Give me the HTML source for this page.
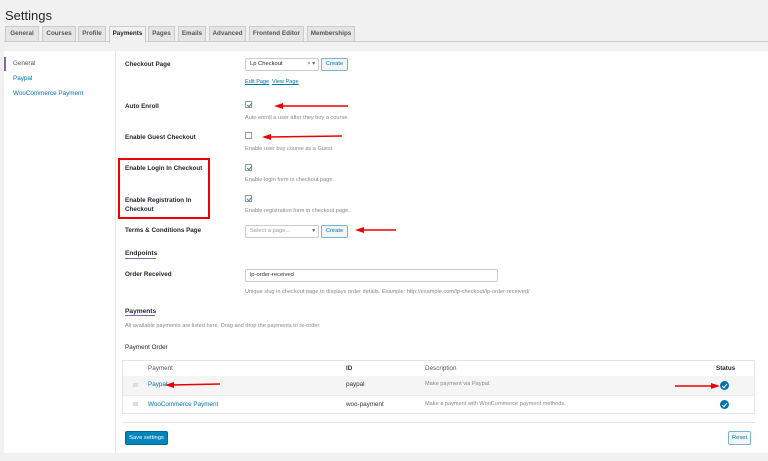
<!DOCTYPE html><html><head><style>
*{margin:0;padding:0;box-sizing:border-box}
body{width:768px;height:461px;background:#f1f1f1;font-family:"Liberation Sans",sans-serif;position:relative;overflow:hidden;color:#23282d}
.a{position:absolute;white-space:nowrap}
.t{font-size:6.3px;color:#555}
.tab{position:absolute;top:26px;height:16px;background:#e5e5e5;border:1px solid #ccc;font-size:6.3px;font-weight:bold;color:#555;text-align:center;line-height:14px}
.lb{font-size:6.3px;font-weight:bold;color:#23282d}
.d{font-size:5.6px;color:#888}
.cb{position:absolute;width:7px;height:7px;border:1px solid #999;background:#fff}
.cb.k::after{content:"";position:absolute;left:1.5px;top:0px;width:2px;height:4px;border:solid #1e8cbe;border-width:0 1.3px 1.3px 0;transform:rotate(40deg)}
.sel{position:absolute;height:13px;border:1px solid #ccc;background:#fff;font-size:5.8px;line-height:11px;padding-left:4px;border-radius:2px}
.btn{position:absolute;height:13px;border:1px solid #7bb3d6;background:#f3f5f6;font-size:5.8px;line-height:11px;text-align:center;color:#0073aa;border-radius:2px}
.lk{color:#0073aa}
.ck{position:absolute;width:9px;height:9px;border-radius:50%;background:#0073aa}
.ck::after{content:"";position:absolute;left:3px;top:1.5px;width:2px;height:4px;border:solid #fff;border-width:0 1.3px 1.3px 0;transform:rotate(40deg)}
</style></head><body>
<div class="a" style="left:5px;top:8px;font-size:13px;color:#23282d">Settings</div>
<div class="a" style="left:4px;top:41px;width:764px;height:1px;background:#ccc"></div>
<div class="tab" style="left:5px;width:34px">General</div>
<div class="tab" style="left:42px;width:34px">Courses</div>
<div class="tab" style="left:78px;width:28px">Profile</div>
<div class="tab" style="left:109px;width:37px;background:#f1f1f1;border-bottom-color:#f1f1f1;height:17px;color:#23282d">Payments</div>
<div class="tab" style="left:148px;width:27px">Pages</div>
<div class="tab" style="left:178px;width:28px">Emails</div>
<div class="tab" style="left:209px;width:37px">Advanced</div>
<div class="tab" style="left:249px;width:55px">Frontend Editor</div>
<div class="tab" style="left:307px;width:48px">Memberships</div>
<div class="a" style="left:4px;top:51px;width:764px;height:402px;background:#fff"></div>
<div class="a" style="left:115px;top:51px;width:1px;height:402px;background:#e5e5e5"></div>
<div class="a" style="left:4px;top:57px;width:2px;height:14px;background:#7e6aa8"></div>
<div class="a t lk" style="left:13px;top:60px;color:#555">General</div>
<div class="a t lk" style="left:13px;top:75px">Paypal</div>
<div class="a t lk" style="left:13px;top:90px">WooCommerce Payment</div>

<div class="a lb" style="left:125px;top:61px">Checkout Page</div>
<div class="sel" style="left:245px;top:58px;width:74px">Lp Checkout<span style="position:absolute;right:3px;color:#666">× ▾</span></div>
<div class="btn" style="left:321px;top:58px;width:27px">Create</div>
<div class="a d lk" style="left:245px;top:79px;text-decoration:underline;color:#0073aa">Edit Page</div>
<div class="a d" style="left:272px;top:79px;text-decoration:underline;color:#0073aa">View Page</div>

<div class="a lb" style="left:125px;top:103px">Auto Enroll</div>
<div class="cb k" style="left:245px;top:101px"></div>
<div class="a d" style="left:245px;top:115px">Auto enroll a user after they buy a course.</div>

<div class="a lb" style="left:125px;top:134px">Enable Guest Checkout</div>
<div class="cb" style="left:245px;top:132px"></div>
<div class="a d" style="left:245px;top:146px">Enable user buy course as a Guest.</div>

<div class="a lb" style="left:125px;top:165px">Enable Login In Checkout</div>
<div class="cb k" style="left:245px;top:164px"></div>
<div class="a d" style="left:245px;top:177px">Enable login form in checkout page.</div>

<div class="a lb" style="left:125px;top:196px;line-height:9px">Enable Registration In<br>Checkout</div>
<div class="cb k" style="left:245px;top:195px"></div>
<div class="a d" style="left:245px;top:208px">Enable registration form in checkout page.</div>
<div class="a" style="left:118px;top:158px;width:92px;height:61px;border:2px solid #e00"></div>

<div class="a lb" style="left:125px;top:227px">Terms &amp; Conditions Page</div>
<div class="sel" style="left:245px;top:225px;width:74px;color:#999">Select a page...<span style="position:absolute;right:3px;color:#666">▾</span></div>
<div class="btn" style="left:321px;top:225px;width:27px">Create</div>

<div class="a lb" style="left:125px;top:250px;font-size:6.6px">Endpoints</div>
<div class="a" style="left:125px;top:258px;width:31px;height:1px;background:#7e6aa8"></div>
<div class="a lb" style="left:125px;top:271px">Order Received</div>
<div class="sel" style="left:245px;top:269px;width:253px;height:13px;color:#333">lp-order-received</div>
<div class="a d" style="left:245px;top:289px">Unique slug in checkout page to displays order details. Example: http://example.com/lp-checkout/lp-order-received/</div>

<div class="a lb" style="left:125px;top:308px;font-size:6.6px">Payments</div>
<div class="a" style="left:125px;top:315px;width:30px;height:1px;background:#7e6aa8"></div>
<div class="a d" style="left:125px;top:323px">All available payments are listed here. Drag and drop the payments to re-order.</div>
<div class="a lb" style="left:125px;top:344px;font-weight:normal;color:#23282d">Payment Order</div>

<div class="a" style="left:122px;top:360px;width:633px;height:54px;border:1px solid #e5e5e5"></div>
<div class="a" style="left:123px;top:376px;width:631px;height:19px;background:#f5f5f5"></div>
<div class="a" style="left:123px;top:395px;width:631px;height:1px;background:#eee"></div>
<div class="a t" style="left:148px;top:365px">Payment</div>
<div class="a t" style="left:346px;top:365px;font-weight:bold;color:#333">ID</div>
<div class="a t" style="left:425px;top:365px">Description</div>
<div class="a t" style="left:716px;top:365px;font-weight:bold;color:#23282d">Status</div>
<div class="a" style="left:133px;top:383px;width:5px;height:4px;background:#ddd"></div>
<div class="a t lk" style="left:148px;top:381px;color:#0073aa">Paypal</div>
<div class="a t" style="left:346px;top:381px;color:#333">paypal</div>
<div class="a d" style="left:425px;top:381px">Make payment via Paypal.</div>
<div class="ck" style="left:720px;top:381px"></div>
<div class="a" style="left:133px;top:402px;width:5px;height:4px;background:#ddd"></div>
<div class="a t" style="left:148px;top:401px;color:#0073aa">WooCommerce Payment</div>
<div class="a t" style="left:346px;top:401px;color:#333">woo-payment</div>
<div class="a d" style="left:425px;top:401px">Make a payment with WooCommerce payment methods.</div>
<div class="ck" style="left:720px;top:400px"></div>

<div class="a" style="left:122px;top:422px;width:633px;height:1px;background:#e5e5e5"></div>
<div class="a" style="left:125px;top:431px;width:43px;height:14px;background:#0085ba;border:1px solid #006799;border-radius:2px;color:#fff;font-size:5.8px;line-height:12px;text-align:center">Save settings</div>
<div class="btn" style="left:728px;top:431px;width:23px;height:14px;line-height:12px">Reset</div>

<svg class="a" style="left:0;top:0" width="768" height="461">
<g stroke="#e00" stroke-width="1.5" fill="#e00">
<line x1="280" y1="106" x2="348" y2="106"/><polygon points="274,106 283,103 283,109" stroke="none"/>
<line x1="268" y1="137" x2="342" y2="136"/><polygon points="262,137 271,134 271,140" stroke="none"/>
<line x1="361" y1="230" x2="396" y2="230"/><polygon points="355,230 364,227 364,233" stroke="none"/>
<line x1="171" y1="385" x2="220" y2="384"/><polygon points="165,385 174,382 174,388" stroke="none"/>
<line x1="675" y1="386" x2="714" y2="386"/><polygon points="720,386 711,383 711,389" stroke="none"/>
</g></svg>
</body></html>
